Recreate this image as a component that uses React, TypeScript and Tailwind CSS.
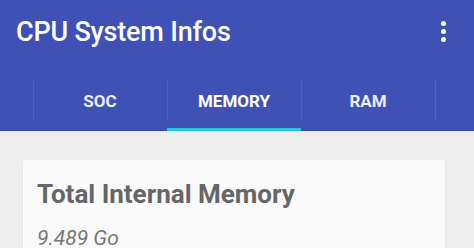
const tabs = ['SOC', 'MEMORY', 'RAM'];

export default function App() {
  return (
    <div className="h-[248px] w-[474px] overflow-hidden bg-[#eeeeee] font-['Roboto',sans-serif]">
      <header className="bg-[#3f51b5] text-white">
        <div className="flex h-[64px] items-center justify-between pl-4 pr-[28px]">
          <h1 className="text-[27px] font-medium tracking-[-0.2px]">CPU System Infos</h1>
          <div className="flex flex-col gap-[3px] pb-[2px]">
            <span className="size-[5px] rounded-full bg-white" />
            <span className="size-[5px] rounded-full bg-white" />
            <span className="size-[5px] rounded-full bg-white" />
          </div>
        </div>
        <nav className="flex h-[67px] border-b border-[#3949ab] pl-[33px]">
          {tabs.map((tab) => (
            <div
              key={tab}
              className="relative flex w-[134px] shrink-0 items-center justify-center pt-[9px] text-[17px] font-bold">
              <span className="absolute left-0 top-[16px] h-[40px] w-px bg-white/10" />
              <span className={tab === 'MEMORY' ? 'text-white' : 'text-white/90'}>{tab}</span>
              {tab === 'MEMORY' && (
                <span className="absolute inset-x-0 bottom-[-1px] h-[3px] bg-[#29c5da]" />
              )}
            </div>
          ))}
          <div className="relative w-[40px]">
            <span className="absolute left-0 top-[16px] h-[40px] w-px bg-white/10" />
          </div>
        </nav>
      </header>
      <main className="px-[23px] pt-[29px] pr-[29px]">
        <section className="rounded-[3px] bg-[#fafafa] px-[14px] pt-[19px] shadow-[0_1px_2px_rgba(0,0,0,0.12)]">
          <h2 className="text-[26px] font-bold leading-[30px] text-[#666666]">Total Internal Memory</h2>
          <p className="mt-[16px] text-[21px] leading-[26px] italic text-[#777777]">9.489 Go</p>
        </section>
      </main>
    </div>
  );
}
